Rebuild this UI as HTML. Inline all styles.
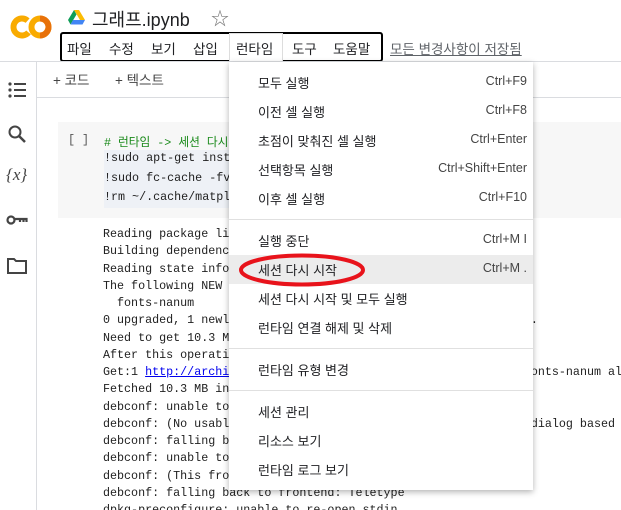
<!DOCTYPE html>
<html><head><meta charset="utf-8"><style>
*{margin:0;padding:0;box-sizing:border-box}
body{width:621px;height:510px;overflow:hidden;background:#fff;position:relative;font-family:"Liberation Sans","Noto Sans CJK KR",sans-serif;color:#202124}
.a{position:absolute;white-space:nowrap}
.mono{font-family:"Liberation Mono","Noto Sans CJK KR",monospace;font-size:11.7px;color:#212121}
.mi{position:absolute;left:258px;font-size:13px;color:#202124}
.sc{position:absolute;right:94px;font-size:12.5px;color:#444}
.sep{position:absolute;left:229px;width:304px;height:1px;background:#e0e0e0}
</style></head><body>
<!-- logo -->
<svg class="a" style="left:10px;top:14px" width="42" height="26" viewBox="0 0 42 26">
<circle cx="12" cy="13" r="8.5" fill="none" stroke="#f9ab00" stroke-width="6" stroke-dasharray="40 14" transform="rotate(40 12 13)"/>
<circle cx="30" cy="13" r="8.5" fill="none" stroke="#f9ab00" stroke-width="6"/>
<path d="M30 4.5 A8.5 8.5 0 0 1 30 21.5" fill="none" stroke="#e8710a" stroke-width="6"/>
</svg>
<!-- drive icon -->
<svg class="a" style="left:68px;top:10px" width="17" height="15" viewBox="0 0 17 15">
<path d="M6 0h5l6 10h-5z" fill="#fbbc04"/><path d="M6 0l-6 10 2.5 4.5 6-10z" fill="#0f9d58"/><path d="M2.5 14.5h12L17 10H5z" fill="#4285f4"/>
</svg>
<div class="a" style="left:92px;top:6px;font-size:18px;color:#202124">그래프.ipynb</div>
<div class="a" style="left:211px;top:5px;font-size:18px;color:#777">☆</div>
<!-- menubar -->
<div class="a" style="left:60px;top:32px;width:323px;height:30px;border:2px solid #000;border-radius:3px"></div>
<div class="a" style="left:229px;top:33px;width:54px;height:30px;background:#fff;border:1px solid #ddd;border-bottom:none"></div>
<div class="a" style="left:67px;top:38px;font-size:13.5px">파일</div>
<div class="a" style="left:109px;top:38px;font-size:13.5px">수정</div>
<div class="a" style="left:151px;top:38px;font-size:13.5px">보기</div>
<div class="a" style="left:193px;top:38px;font-size:13.5px">삽입</div>
<div class="a" style="left:236px;top:38px;font-size:13.5px">런타임</div>
<div class="a" style="left:292px;top:38px;font-size:13.5px">도구</div>
<div class="a" style="left:333px;top:38px;font-size:13.5px">도움말</div>
<div class="a" style="left:390px;top:38px;font-size:13.5px;color:#5f6368;text-decoration:underline">모든 변경사항이 저장됨</div>
<!-- lines -->
<div class="a" style="left:0;top:61px;width:621px;height:1px;background:#dadce0"></div>
<div class="a" style="left:36px;top:61px;width:1px;height:449px;background:#dadce0"></div>
<div class="a" style="left:37px;top:97px;width:584px;height:1px;background:#dadce0"></div>
<!-- sidebar icons -->
<svg class="a" style="left:7px;top:80px" width="20" height="20" viewBox="0 0 20 20" fill="#444"><circle cx="3" cy="4" r="1.6"/><circle cx="3" cy="10" r="1.6"/><circle cx="3" cy="16" r="1.6"/><rect x="7" y="3" width="12" height="2"/><rect x="7" y="9" width="12" height="2"/><rect x="7" y="15" width="12" height="2"/></svg>
<svg class="a" style="left:7px;top:124px" width="20" height="20" viewBox="0 0 20 20"><circle cx="8" cy="8" r="5.5" fill="none" stroke="#444" stroke-width="2"/><path d="M12 12l6 6" stroke="#444" stroke-width="2.5"/></svg>
<div class="a" style="left:6px;top:165px;font-size:17px;font-style:italic;color:#444;font-family:'Liberation Serif',serif">{<i>x</i>}</div>
<svg class="a" style="left:6px;top:214px" width="22" height="12" viewBox="0 0 22 12"><circle cx="5" cy="6" r="3.5" fill="none" stroke="#444" stroke-width="2.2"/><path d="M8.5 5h12v3M14 5v3M17.5 5v3" stroke="#444" stroke-width="2.2" fill="none"/></svg>
<svg class="a" style="left:7px;top:258px" width="20" height="16" viewBox="0 0 20 16"><path d="M1 1h6l2 2h10v12H1z" fill="none" stroke="#444" stroke-width="2"/></svg>
<!-- toolbar -->
<div class="a" style="left:53px;top:69px;font-size:13.5px;color:#444">+ 코드</div>
<div class="a" style="left:115px;top:69px;font-size:13.5px;color:#444">+ 텍스트</div>
<!-- code cell -->
<div class="a" style="left:58px;top:122px;width:563px;height:96px;background:#f7f7f7"></div>
<div class="a" style="left:104px;top:150px;width:130px;height:58px;background:#eef1f6"></div>
<div class="a mono" style="left:68px;top:133px;color:#555">[ ]</div>
<div class="a mono" style="left:104px;top:133px;color:#1a8a1a">#&nbsp;런타임 -&gt; 세션 다시 시작</div>
<div class="a mono" style="left:104px;top:151px">!sudo apt-get install -y fonts-nanum</div>
<div class="a mono" style="left:104px;top:171px">!sudo fc-cache -fv</div>
<div class="a mono" style="left:104px;top:190px">!rm ~/.cache/matplotlib -rf</div>
<!-- output -->
<div class="a" style="left:103px;top:226px;width:518px;height:284px;overflow:hidden">
<div class="mono" style="line-height:17.27px;white-space:nowrap">Reading package lists...<br>Building dependency tree...<br>Reading state information...<br>The following NEW packages will be installed:<br>&nbsp;&nbsp;fonts-nanum<br>0 upgraded, 1 newly installed, 0 to remove and 1 not upgraded.<br>Need to get 10.3 MB of archives.<br>After this operation, 34 MB of additional space will be used.<br>Get:1 <span style="color:#00e;text-decoration:underline">http://archive.ubuntu.com/ubuntu</span> jammy/universe amd64 fonts-nanum all<br>Fetched 10.3 MB in 1s<br>debconf: unable to initialize frontend: Dialog<br>debconf: (No usable dialog-like program is installed, so the dialog based<br>debconf: falling back to frontend: Readline<br>debconf: unable to initialize frontend: Readline<br>debconf: (This frontend requires a controlling tty.)<br>debconf: falling back to frontend: Teletype<br>dpkg-preconfigure: unable to re-open stdin</div></div>
<!-- menu -->
<div class="a" style="left:229px;top:62px;width:304px;height:428px;background:#fff;box-shadow:0 2px 6px rgba(0,0,0,.3)"></div>
<div class="a" style="left:229px;top:255px;width:304px;height:29px;background:#ececec"></div>
<div class="mi" style="top:73px">모두 실행</div><div class="sc" style="top:74px">Ctrl+F9</div>
<div class="mi" style="top:102px">이전 셀 실행</div><div class="sc" style="top:103px">Ctrl+F8</div>
<div class="mi" style="top:131px">초점이 맞춰진 셀 실행</div><div class="sc" style="top:132px">Ctrl+Enter</div>
<div class="mi" style="top:160px">선택항목 실행</div><div class="sc" style="top:161px">Ctrl+Shift+Enter</div>
<div class="mi" style="top:189px">이후 셀 실행</div><div class="sc" style="top:190px">Ctrl+F10</div>
<div class="sep" style="top:219px"></div>
<div class="mi" style="top:231px">실행 중단</div><div class="sc" style="top:232px">Ctrl+M I</div>
<div class="mi" style="top:260px">세션 다시 시작</div><div class="sc" style="top:261px">Ctrl+M .</div>
<div class="mi" style="top:289px">세션 다시 시작 및 모두 실행</div>
<div class="mi" style="top:318px">런타임 연결 해제 및 삭제</div>
<div class="sep" style="top:348px"></div>
<div class="mi" style="top:360px">런타임 유형 변경</div>
<div class="sep" style="top:390px"></div>
<div class="mi" style="top:402px">세션 관리</div>
<div class="mi" style="top:431px">리소스 보기</div>
<div class="mi" style="top:460px">런타임 로그 보기</div>
<svg class="a" style="left:238px;top:252px" width="130" height="36"><ellipse cx="64" cy="18" rx="61" ry="14.5" fill="none" stroke="#e8131b" stroke-width="4"/></svg>
</body></html>
